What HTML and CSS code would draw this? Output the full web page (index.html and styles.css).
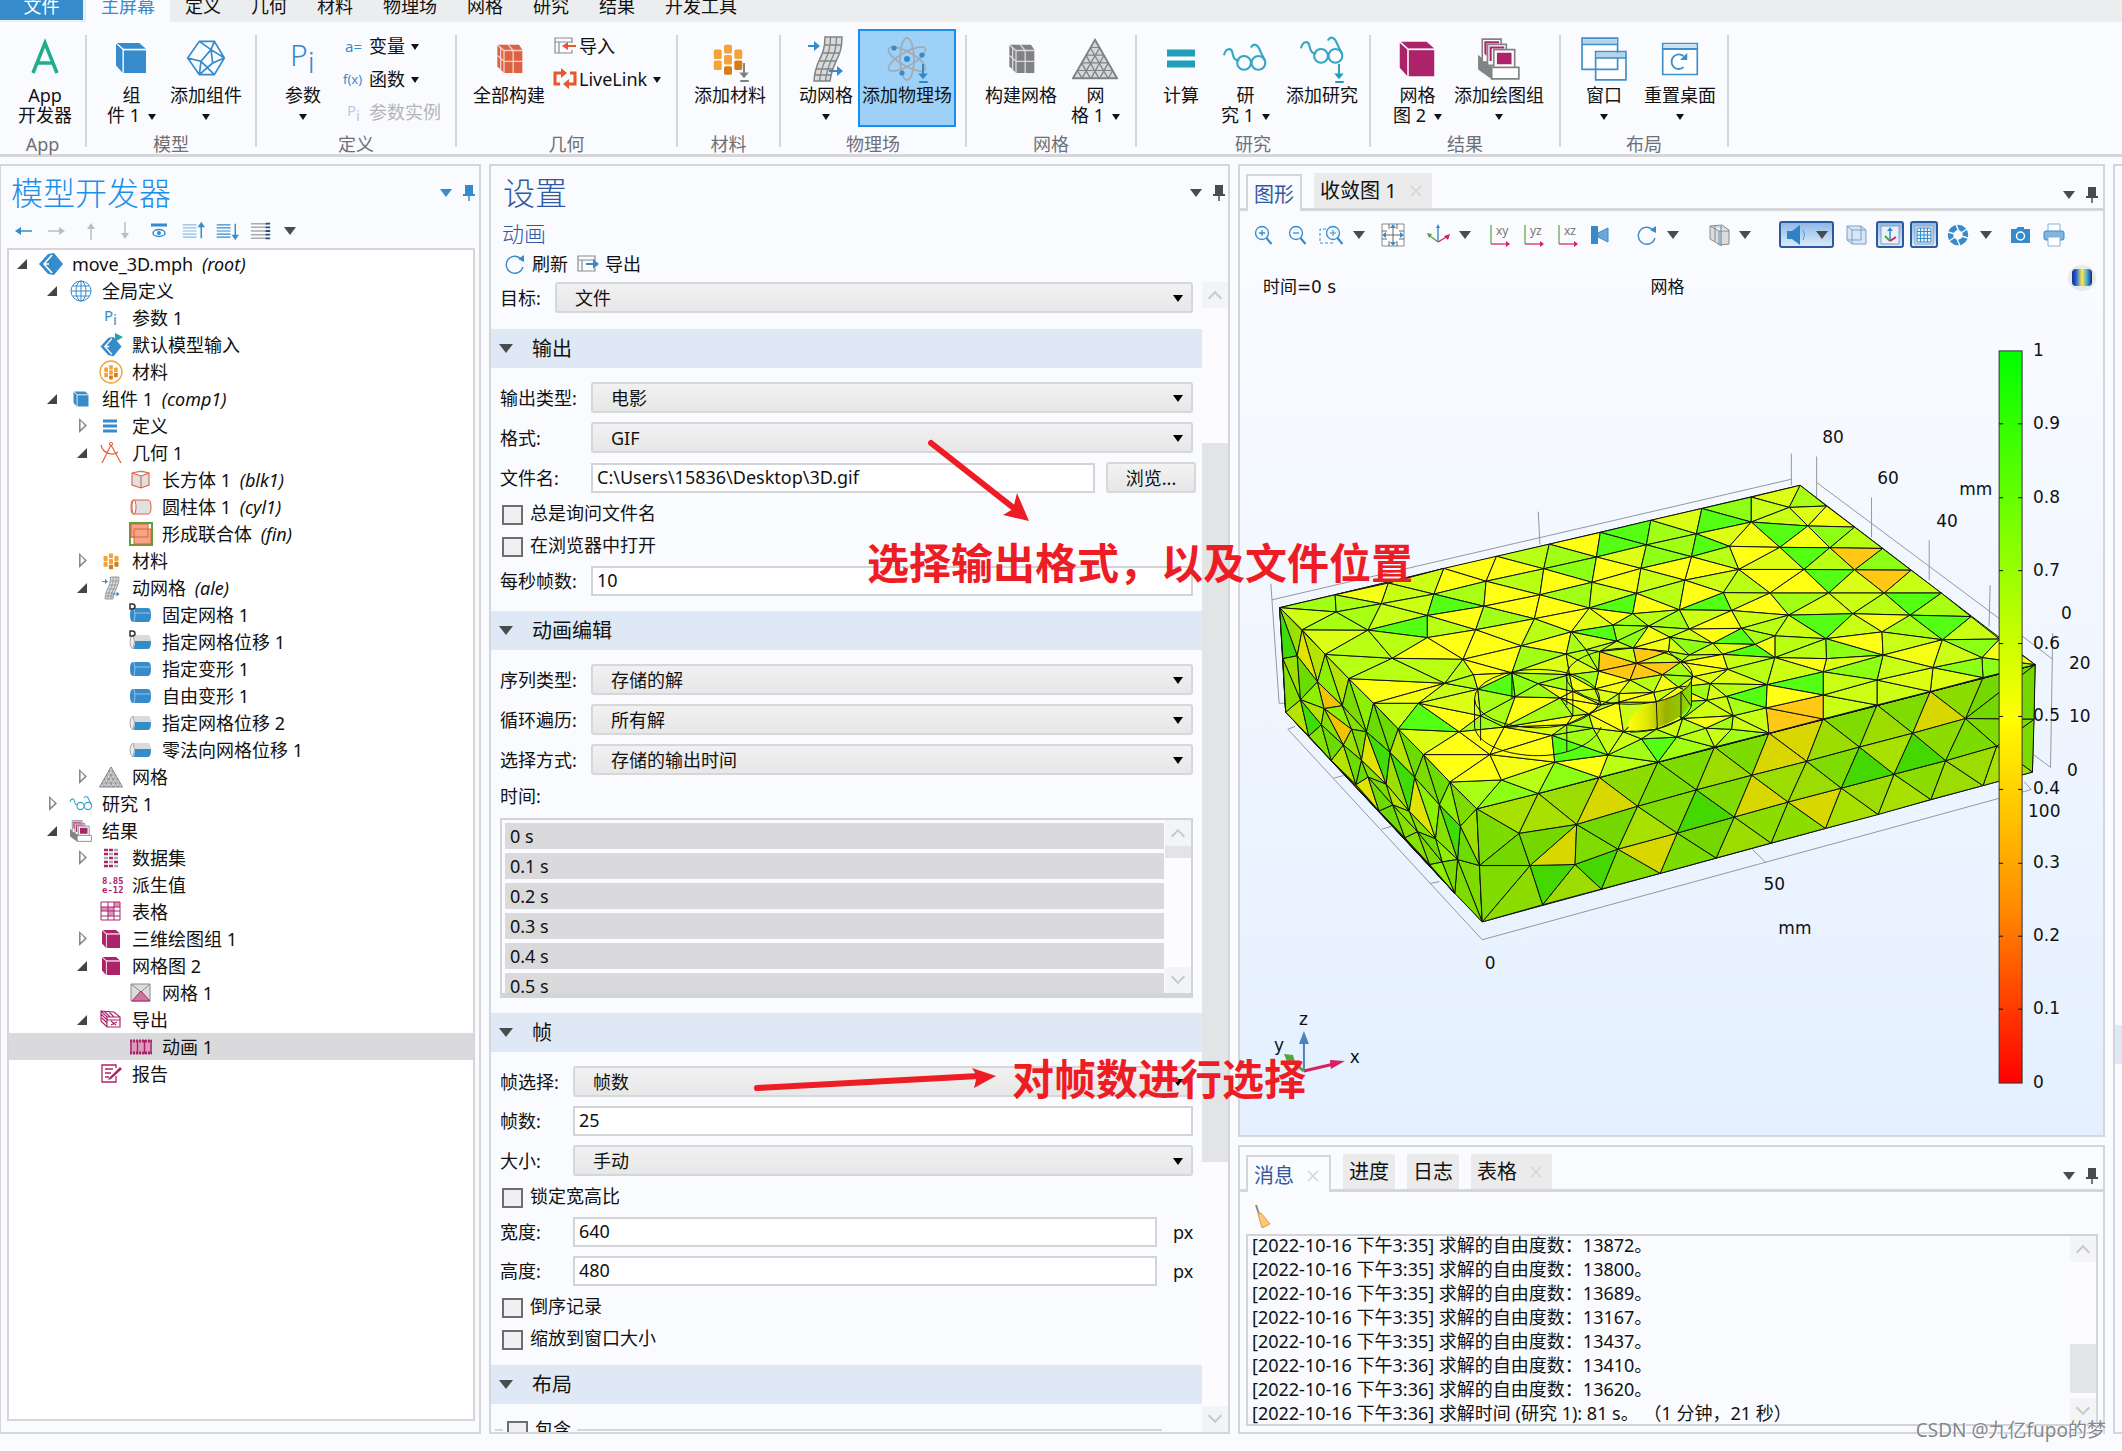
FILE: index.html
```html
<!DOCTYPE html>
<html lang="zh-CN">
<head>
<meta charset="utf-8">
<title>move_3D.mph</title>
<link rel="stylesheet" href="styles.css">
</head>
<body>
<svg class="defs" width="0" height="0" aria-hidden="true">
  <defs>
    <symbol id="cube" viewBox="0 0 24 24"><path d="M3 3.500 7 7v14L3 16.500zM3.500 3H17l4 3.500H7.500z" fill="currentColor"/><path d="M7.600 7.400H21V21H7.600z" fill="currentColor"/><path d="m3 3 4.300 4V21M7.300 7H21" fill="none" stroke="#fff" stroke-width=".6" opacity=".8"/></symbol>
    <symbol id="gridcube" viewBox="0 0 24 24"><path d="M5 4h13l2 3v14H9l-4-4z" fill="currentColor"/><path d="m5 4 4 3.500h11M9 7.500V21M14.500 7.500V21M9 14h11M5 10.500 9 14M11.500 4l3 3.500M7 5.500V19" fill="none" stroke="#fff" stroke-width=".8" opacity=".7"/></symbol>
    <symbol id="wirecube" viewBox="0 0 24 24"><path d="M1 12 8 2h9l6 10-6 10H8zM8 2l7 5-6 7-8-2M15 7l8 5M17 2l-2 5M9 14l8 8M8 22l1-8M15 7l1 8 7-3M16 15l-8 7" fill="none" stroke="#368ccb" stroke-width="1"/></symbol>
    <symbol id="mats" viewBox="0 0 24 24"><g fill="#f2a33c"><rect x="3" y="6" width="5" height="6" rx="1"/><rect x="3" y="13" width="5" height="6" rx="1"/><rect x="9.500" y="3" width="5" height="5.500" rx="1"/><rect x="9.500" y="9.500" width="5" height="6" rx="1"/><rect x="16" y="6" width="5" height="6" rx="1"/></g><g fill="#d67d1b"><rect x="9.500" y="16.500" width="5" height="5.500" rx="1"/><rect x="16" y="13" width="5" height="6" rx="1"/></g></symbol>
    <symbol id="matring" viewBox="0 0 24 24"><circle cx="12" cy="12" r="11" fill="none" stroke="#f2a33c" stroke-width="1.300"/><use href="#mats" x="3" y="3" width="18" height="18"/></symbol>
    <symbol id="down" viewBox="0 0 12 20"><path d="M6 0v14M2 19h9" stroke="currentColor" stroke-width="2" fill="none"/><path d="m1 10 5 6 5-6z" fill="currentColor"/></symbol>
    <symbol id="glasses" viewBox="0 0 24 24"><path d="M1 10c1-4 4-4 4.500-1S7 13 9 12.500M15 6c2-3 4-1 5 2l2.500 5" fill="none" stroke="#35a6c4" stroke-width="1.100"/><circle cx="11.500" cy="14" r="3.600" fill="none" stroke="#35a6c4" stroke-width="1.100"/><circle cx="19" cy="14" r="3.600" fill="none" stroke="#35a6c4" stroke-width="1.100"/></symbol>
    <symbol id="movemesh" viewBox="0 0 36 48"><path d="M17 2h17c0 22-9 22-12 44H6C7 24 17 24 17 2z" fill="#d9dadb" stroke="#828385" stroke-width="1.500"/><path d="M22.500 2c0 22-9 22-11 44M28.500 2c0 22-9 22-11 44M17 10h17M15 18h16M12 26h16M8 34h17M7 40h16" stroke="#828385" stroke-width="1.300" fill="none"/><path d="M0 11h8M21 36h8" stroke="#368ccb" stroke-width="2"/><path d="m6 6 6 5-6 5zM29 31l6 5-6 5z" fill="#368ccb"/></symbol>
    <symbol id="atom" viewBox="0 0 44 48"><g fill="none" stroke="#a3abb3" stroke-width="1.800"><ellipse cx="22" cy="24" rx="7" ry="21"/><ellipse cx="22" cy="24" rx="7" ry="21" transform="rotate(60 22 24)"/><ellipse cx="22" cy="24" rx="7" ry="21" transform="rotate(-60 22 24)"/></g><g fill="#368ccb"><circle cx="22" cy="24" r="3"/><circle cx="9" cy="13" r="2.600"/><circle cx="37" cy="20" r="2.600"/><circle cx="17" cy="38" r="2.600"/></g></symbol>
    <symbol id="trimesh" viewBox="0 0 48 44"><path d="M24 2 47 42H1z" fill="#d5d6d7" stroke="#808183" stroke-width="2"/><path d="M19 10h10M14.500 18h19M10 26h28M5.500 34h37M29 10 10.500 42M33.500 18 20 42M38 26l-9 16M42.500 34 38 42M19 10l18.500 32M14.500 18 28 42M10 26l9 16M5.500 34l5 8" stroke="#808183" stroke-width="1.300" fill="none"/></symbol>
    <symbol id="plots" viewBox="0 0 44 44"><path d="M2 18v14l14 10V30z" fill="#808482"/><g fill="#fff" stroke="#808482" stroke-width="1.600"><path d="M6 3h18v22H6z"/><path d="M11 8h18v20H11z"/><path d="M17 13h20v18H17z"/><path d="M15 30h26v11H15z"/></g><path d="M8 5h14v2H10v12l-2-2zM13 10h14v2H15v12h-2zM20 16h14v11H20z" fill="#ad236a"/></symbol>
    <symbol id="windows" viewBox="0 0 44 44"><path d="M1 2h34v30H1zM14 15h29v27H14z" fill="#fff" stroke="#3c90cd" stroke-width="1.600"/><path d="M2 3h32v4H2zM15 16h27v5H15z" fill="#b7d3ea"/><path d="M1 8h34M14 21h29" stroke="#3c90cd" stroke-width="1.500"/></symbol>
    <symbol id="reset" viewBox="0 0 44 44"><path d="M3 5h38v34H3z" fill="#fff" stroke="#3c90cd" stroke-width="1.800"/><path d="M4 6h36v4H4z" fill="#cfe1f1"/><path d="M3 11h38M26 19a8 8 0 1 0 0 12" fill="none" stroke="#3c90cd" stroke-width="2"/><path d="M30 15v8h-8z" fill="#3c90cd"/></symbol>
    <symbol id="pin" viewBox="0 0 12 18"><path d="M2 1h8v9h2v2H0v-2h2z" fill="currentColor"/><path d="M6 12v5" stroke="currentColor" stroke-width="1.500"/></symbol>
    <symbol id="arrow" viewBox="0 0 18 18"><path d="M4 9h14" stroke="currentColor" stroke-width="1.500"/><path d="m1 9 6-4v8z" fill="currentColor"/></symbol>
    <symbol id="logo" viewBox="0 0 24 24"><path d="m0 12 9-10 6-1 9 11-9 11-6-1z" fill="#368ccb"/><path d="M13 3 5 12l8 9M5 12h5" stroke="#fff" stroke-width="1.600" fill="none"/></symbol>
    <symbol id="logoin" viewBox="0 0 24 24"><use href="#logo" y="3" width="24" height="21"/><path d="m16 0 8 4-8 5z" fill="#28a0b4"/></symbol>
    <symbol id="globe" viewBox="0 0 24 24"><g fill="none" stroke="#368ccb"><circle cx="12" cy="12" r="10"/><ellipse cx="12" cy="12" rx="5" ry="10"/><path d="M12 2v20M2 12h20M4 7h16M4 17h16"/></g></symbol>
    <symbol id="bars" viewBox="0 0 24 24"><path d="M4 7h14M4 12h14M4 17h14" stroke="#368ccb" stroke-width="3"/></symbol>
    <symbol id="compass" viewBox="0 0 24 24"><path d="M3 22 12 4l10 18M2 4c2 9 12 11 17 7" fill="none" stroke="#e0603f" stroke-width="1.200"/><circle cx="12" cy="3" r="1.600" fill="none" stroke="#e0603f"/></symbol>
    <symbol id="block" viewBox="0 0 24 24"><path d="m3 5 9-2 8 2v12l-8 3-9-3zM3 5l9 3 8-3M12 8v12" fill="#dfe0e1" stroke="#e0603f" stroke-width="1.100"/></symbol>
    <symbol id="cyl" viewBox="0 0 24 24"><path d="M4 5h15q3 0 3 7t-3 7H4q-2 0-2-7t2-7z" fill="#dfe0e1" stroke="#e0603f"/><ellipse cx="5" cy="12" rx="2" ry="7" fill="#fff" stroke="#e0603f"/></symbol>
    <symbol id="union" viewBox="0 0 24 24"><path d="M1 1h22v22H1z" fill="#fff" stroke="#56a33f" stroke-width="2"/><path d="M2 2h17v5h3v15H5v-6H2z" fill="#f4a583"/><path d="M5 7h17v15H5zM2 2h17v13H2z" fill="none" stroke="#e0603f"/></symbol>
    <symbol id="cylb" viewBox="0 0 24 24"><path d="M4 5h15q3 0 3 7t-3 7H4q-3 0-3-7t3-7z" fill="#368ccb"/><path d="M5 5q2 7 0 14M6 10h15" stroke="#8fc4ea" fill="none"/></symbol>
    <symbol id="cylh" viewBox="0 0 24 24"><path d="M4 5h15q3 0 3 7t-3 7H4q-3 0-3-7t3-7z" fill="#d9dadc"/><path d="M6 11h16q0 8-3 8H5z" fill="#368ccb"/><path d="M4 5q3 7 0 14-3-2-3-7t3-7z" fill="#efeff0" stroke="#a6a8ab"/></symbol>
    <symbol id="dmark" viewBox="0 0 24 24"><path d="M1 1h2q3 0 3 2.500T3 6H1z" fill="#fff" stroke="#333" stroke-width="1.500"/></symbol>
    <symbol id="data" viewBox="0 0 24 24"><path d="M5 4h4M5 8h4M5 16h4M10 12h4M10 4h4M15 8h4M15 16h4M10 20h4M5 20h4" stroke="#ad236a" stroke-width="2.500"/><path d="M15 4h4M10 8h4M5 12h4M15 12h4M10 16h4M15 20h4" stroke="#aaa" stroke-width="2.500"/></symbol>
    <symbol id="table" viewBox="0 0 24 24"><path d="M2 7h7v4H2zM9 7h6v9H9zM15 2h6v5h-6z" fill="#d897b8"/><path d="M2 2h19v18H2zM9 2v18M15 2v18M2 7h19M2 11h19M2 16h19" stroke="#ad236a" fill="none"/></symbol>
    <symbol id="tri" viewBox="0 0 24 24"><path d="M2 3h19v17H2z" fill="#dcdcdd" stroke="#8a8a8c"/><path d="m2 3 10 8 9-8" stroke="#8a8a8c" fill="none"/><path d="m3 20 9-10 9 10z" fill="#c9779c" stroke="#ad236a"/></symbol>
    <symbol id="export" viewBox="0 0 24 24"><path d="m2 3 13 1 6 5v10H8l-6-6zM2 3l6 6h13M8 9v10M2 6l6 6h13M3 10l5 5M5 3l6 6M9 3l6 6M12 13l5 4M12 17l6-3" fill="none" stroke="#ad236a" stroke-width="1.200"/></symbol>
    <symbol id="film" viewBox="0 0 24 24"><path d="M1 5h22v14H1z" fill="#d99cba"/><path d="M1 6h22M1 18h22" stroke="#ad236a" stroke-width="3" stroke-dasharray="2 1"/><path d="M2 5v14M8.500 5v14M15.500 5v14M22 5v14" stroke="#ad236a" stroke-width="1.400"/></symbol>
    <symbol id="report" viewBox="0 0 24 24"><path d="M17 14v6H3V3h14v3M6 7h8M6 11h6M6 15h4" fill="none" stroke="#ad236a" stroke-width="1.300"/><path d="m10 16 11-11 2 2-11 10-3 1z" fill="#ad236a"/></symbol>
    <symbol id="mag" viewBox="0 0 24 24"><circle cx="11" cy="10" r="6.500" fill="#f3f9ff" stroke="#368ccb" stroke-width="1.300"/><path d="m15.500 15 5 6" stroke="#368ccb" stroke-width="2.200"/></symbol>
    <symbol id="cw" viewBox="0 0 24 24"><path d="M17 6a8.500 8.500 0 1 0 3 9" fill="none" stroke="#368ccb" stroke-width="1.400"/><path d="m15 7 6-4v7z" fill="#368ccb"/></symbol>
    <symbol id="port" viewBox="0 0 24 24"><path d="M19 9V4H2v15h17v-3M2 8h17M6 8v11" fill="none" stroke="#8a8c90" stroke-width="1.200"/></symbol>
    <symbol id="ax" viewBox="0 0 24 24"><path d="M4 2v19" stroke="#54a53f" stroke-width="1.200"/><path d="M4 21h17" stroke="#d8215f" stroke-width="1.200"/><path d="m19 18 4 3-4 3z" fill="#d8215f"/></symbol>
    <symbol id="lines" viewBox="0 0 24 24"><path d="M1 4h18M1 8h18M1 12h18M1 16h18M1 20h18" stroke="currentColor" stroke-width="1.600"/></symbol>
  </defs>
</svg>

<div class="app">
  <nav class="tabs">
    <a class="file" href="#file">文件</a><a class="on" href="#home">主屏幕</a><a href="#def">定义</a><a href="#geom">几何</a><a href="#mat">材料</a><a href="#phys">物理场</a><a href="#mesh">网格</a><a href="#study">研究</a><a href="#results">结果</a><a href="#dev">开发工具</a>
  </nav>

  <header class="ribbon">
    <section class="group g1"><div class="tools">
      <button class="tool"><svg class="big" viewBox="0 0 40 40"><path d="M8 35 20 5l12 30M12 25h16" fill="none" stroke="#20ae8c" stroke-width="3.500"/></svg>App<br>开发器</button></div><h2>App</h2></section>
    <section class="group g2"><div class="tools">
      <button class="tool"><svg class="big blue"><use href="#cube"/></svg>组<br>件 1<i class="caret"></i></button>
      <button class="tool"><svg class="big"><use href="#wirecube"/></svg>添加组件<br><i class="caret solo"></i></button></div><h2>模型</h2></section>
    <section class="group g3"><div class="tools">
      <button class="tool"><svg class="big" viewBox="0 0 40 40"><text class="pi" x="7" y="28">P<tspan dy="7">i</tspan></text></svg>参数<br><i class="caret solo"></i></button>
      <div class="list">
        <button class="mini"><svg viewBox="0 0 24 24"><text class="glyph" x="2" y="18">a=</text></svg>变量<i class="caret"></i></button>
        <button class="mini"><svg viewBox="0 0 24 24"><text class="glyph sm" x="0" y="17">f(x)</text></svg>函数<i class="caret"></i></button>
        <button class="mini" disabled><svg viewBox="0 0 24 24"><text class="glyph" x="4" y="16">P<tspan dy="5">i</tspan></text></svg>参数实例</button>
      </div></div><h2>定义</h2></section>
    <section class="group g4"><div class="tools">
      <button class="tool"><svg class="big red"><use href="#gridcube"/></svg>全部构建</button>
      <div class="list">
        <button class="mini"><svg viewBox="0 0 24 24"><use href="#port"/><path d="M11 12h12" stroke="#e6572b" stroke-width="2"/><path d="m9 12 6-4v8z" fill="#e6572b"/></svg>导入</button>
        <button class="mini"><svg viewBox="0 0 24 24"><path d="M9 6H2v11h5M15 17h7V6h-5" fill="none" stroke="#e6572b" stroke-width="3"/><path d="m8 1 6 5-6 5zM16 12l-6 5 6 5z" fill="#e6572b"/></svg>LiveLink<i class="caret"></i></button>
      </div></div><h2>几何</h2></section>
    <section class="group g5"><div class="tools">
      <button class="tool"><svg class="big wide" viewBox="0 0 44 48"><use href="#mats" x="1" y="5" width="38" height="38"/><use href="#down" x="30" y="28" width="12" height="19" color="#808184"/></svg>添加材料</button></div><h2>材料</h2></section>
    <section class="group g6"><div class="tools">
      <button class="tool"><svg class="big wide"><use href="#movemesh"/></svg>动网格<br><i class="caret solo"></i></button>
      <button class="tool on"><svg class="big wide" viewBox="0 0 44 48"><use href="#atom"/><use href="#down" x="31" y="29" width="14" height="19" color="#2f86c8"/></svg>添加物理场</button></div><h2>物理场</h2></section>
    <section class="group g7"><div class="tools">
      <button class="tool"><svg class="big gray"><use href="#gridcube"/></svg>构建网格</button>
      <button class="tool"><svg class="big wide"><use href="#trimesh"/></svg>网<br>格 1<i class="caret"></i></button></div><h2>网格</h2></section>
    <section class="group g8"><div class="tools">
      <button class="tool"><svg class="big" viewBox="0 0 40 40"><path d="M6 15h28M6 26h28" stroke="#229fb8" stroke-width="7"/></svg>计算</button>
      <button class="tool"><svg class="big wide"><use href="#glasses"/></svg>研<br>究 1<i class="caret"></i></button>
      <button class="tool"><svg class="big wide" viewBox="0 0 46 48"><use href="#glasses" x="0" y="-6" width="46" height="46"/><use href="#down" x="33" y="29" width="14" height="19" color="#229fb8"/></svg>添加研究</button></div><h2>研究</h2></section>
    <section class="group g9"><div class="tools">
      <button class="tool"><svg class="big wide plum"><use href="#cube"/></svg>网格<br>图 2<i class="caret"></i></button>
      <button class="tool"><svg class="big wide"><use href="#plots"/></svg>添加绘图组<br><i class="caret solo"></i></button></div><h2>结果</h2></section>
    <section class="group g10"><div class="tools">
      <button class="tool"><svg class="big wide"><use href="#windows"/></svg>窗口<br><i class="caret solo"></i></button>
      <button class="tool"><svg class="big wide pad4"><use href="#reset"/></svg>重置桌面<br><i class="caret solo"></i></button></div><h2>布局</h2></section>
  </header>

  <main class="work">
    <section class="panel builder">
      <div class="head"><h1>模型开发器</h1><span class="winctl blue"><i class="caret lg"></i><svg class="pin"><use href="#pin"/></svg></span></div>
      <div class="treebar">
        <button aria-label="后退"><svg class="s18 blue"><use href="#arrow"/></svg></button>
        <button aria-label="前进"><svg class="s18 dim r180"><use href="#arrow"/></svg></button>
        <button aria-label="上移"><svg class="s18 dim r90"><use href="#arrow"/></svg></button>
        <button aria-label="下移"><svg class="s18 dim r270"><use href="#arrow"/></svg></button>
        <button aria-label="显示"><svg class="s18" viewBox="0 0 18 18"><path d="M1 3h16" stroke="#368ccb" stroke-width="3"/><ellipse cx="9" cy="11" rx="6" ry="3.500" fill="none" stroke="#368ccb" stroke-width="1.500"/><circle cx="9" cy="11" r="2" fill="#368ccb"/></svg></button>
        <button aria-label="折叠"><svg class="s24" viewBox="0 0 24 24"><use href="#lines" width="20" height="24" color="#8abbe2"/><path d="M21 20V5" stroke="#368ccb" stroke-width="1.600"/><path d="m17 8 4-6 4 6z" fill="#368ccb"/></svg></button>
        <button aria-label="展开"><svg class="s24" viewBox="0 0 24 24"><use href="#lines" width="20" height="24" color="#368ccb"/><path d="M21 4v15" stroke="#368ccb" stroke-width="1.600"/><path d="m17 16 4 6 4-6z" fill="#368ccb"/></svg></button>
        <button aria-label="列"><svg class="s24" viewBox="0 0 24 24"><use href="#lines" width="24" height="24" color="#aaabad"/><path d="M17 4h5M17 8h5M17 12h5M17 16h5M17 20h5" stroke="#2d4f80" stroke-width="2"/></svg></button>
        <i class="caret lg dark"></i>
      </div>
      <ul class="tree">
        <li class="l0"><i class="open"></i><svg><use href="#logo"/></svg>move_3D.mph <em>(root)</em></li>
        <li class="l1"><i class="open"></i><svg><use href="#globe"/></svg>全局定义</li>
        <li class="l2"><i></i><svg viewBox="0 0 24 24"><text class="glyph" x="5" y="15">P<tspan dy="4">i</tspan></text></svg>参数 1</li>
        <li class="l2"><i></i><svg><use href="#logoin"/></svg>默认模型输入</li>
        <li class="l2"><i></i><svg><use href="#matring"/></svg>材料</li>
        <li class="l1"><i class="open"></i><svg class="blue pad"><use href="#cube"/></svg>组件 1 <em>(comp1)</em></li>
        <li class="l2"><i class="shut"></i><svg><use href="#bars"/></svg>定义</li>
        <li class="l2"><i class="open"></i><svg><use href="#compass"/></svg>几何 1</li>
        <li class="l3"><i></i><svg><use href="#block"/></svg>长方体 1 <em>(blk1)</em></li>
        <li class="l3"><i></i><svg><use href="#cyl"/></svg>圆柱体 1 <em>(cyl1)</em></li>
        <li class="l3"><i></i><svg><use href="#union"/></svg>形成联合体 <em>(fin)</em></li>
        <li class="l2"><i class="shut"></i><svg class="pad"><use href="#mats"/></svg>材料</li>
        <li class="l2"><i class="open"></i><svg><use href="#movemesh"/></svg>动网格 <em>(ale)</em></li>
        <li class="l3"><i></i><svg><use href="#cylb"/><use href="#dmark"/></svg>固定网格 1</li>
        <li class="l3"><i></i><svg><use href="#cylh"/><use href="#dmark"/></svg>指定网格位移 1</li>
        <li class="l3"><i></i><svg><use href="#cylb"/></svg>指定变形 1</li>
        <li class="l3"><i></i><svg><use href="#cylb"/></svg>自由变形 1</li>
        <li class="l3"><i></i><svg><use href="#cylh"/></svg>指定网格位移 2</li>
        <li class="l3"><i></i><svg><use href="#cylh"/></svg>零法向网格位移 1</li>
        <li class="l2"><i class="shut"></i><svg><use href="#trimesh"/></svg>网格</li>
        <li class="l1"><i class="shut"></i><svg><use href="#glasses"/></svg>研究 1</li>
        <li class="l1"><i class="open"></i><svg><use href="#plots"/></svg>结果</li>
        <li class="l2"><i class="shut"></i><svg><use href="#data"/></svg>数据集</li>
        <li class="l2"><i></i><svg viewBox="0 0 24 24"><text class="num" x="3" y="11">8.85</text><text class="num" x="3" y="20">e-12</text></svg>派生值</li>
        <li class="l2"><i></i><svg><use href="#table"/></svg>表格</li>
        <li class="l2"><i class="shut"></i><svg class="plum"><use href="#cube"/></svg>三维绘图组 1</li>
        <li class="l2"><i class="open"></i><svg class="plum"><use href="#cube"/></svg>网格图 2</li>
        <li class="l3"><i></i><svg><use href="#tri"/></svg>网格 1</li>
        <li class="l2"><i class="open"></i><svg><use href="#export"/></svg>导出</li>
        <li class="l3 sel"><i></i><svg><use href="#film"/></svg>动画 1</li>
        <li class="l2"><i></i><svg><use href="#report"/></svg>报告</li>
      </ul>
    </section>

    <section class="panel settings">
      <div class="head"><h1>设置</h1><span class="winctl dark"><i class="caret lg"></i><svg class="pin"><use href="#pin"/></svg></span></div>
      <h2 class="sub">动画</h2>
      <div class="actions">
        <button><svg><use href="#cw"/></svg>刷新</button>
        <button><svg viewBox="0 0 24 24"><use href="#port"/><path d="M10 12h9" stroke="#368ccb" stroke-width="2"/><path d="m17 7 6 5-6 5z" fill="#368ccb"/></svg>导出</button>
      </div>
      <div class="scroller">
        <form class="form">
          <div class="row target"><label for="target">目标:</label><span class="pick"><select id="target"><option>文件</option></select></span></div>
          <h3><i class="caret lg dark"></i>输出</h3>
          <div class="body wide">
            <div class="row"><label for="otype">输出类型:</label><span class="pick"><select id="otype"><option>电影</option></select></span></div>
            <div class="row"><label for="fmt">格式:</label><span class="pick"><select id="fmt"><option>GIF</option></select></span></div>
            <div class="row"><label for="fname">文件名:</label><input type="text" id="fname" value="C:\Users\15836\Desktop\3D.gif"><button type="button" class="browse">浏览...</button></div>
            <label class="check"><input type="checkbox">总是询问文件名</label>
            <label class="check"><input type="checkbox">在浏览器中打开</label>
            <div class="row"><label for="fps">每秒帧数:</label><input type="text" id="fps" value="10"></div>
          </div>
          <h3><i class="caret lg dark"></i>动画编辑</h3>
          <div class="body wide">
            <div class="row"><label for="seq">序列类型:</label><span class="pick"><select id="seq"><option>存储的解</option></select></span></div>
            <div class="row"><label for="loop">循环遍历:</label><span class="pick"><select id="loop"><option>所有解</option></select></span></div>
            <div class="row"><label for="sel">选择方式:</label><span class="pick"><select id="sel"><option>存储的输出时间</option></select></span></div>
            <div class="caption">时间:</div>
            <div class="times">
              <ul><li>0 s</li><li>0.1 s</li><li>0.2 s</li><li>0.3 s</li><li>0.4 s</li><li>0.5 s</li></ul>
              <div class="bar t1"><i class="up"></i><b></b><i class="dn"></i></div>
            </div>
          </div>
          <h3><i class="caret lg dark"></i>帧</h3>
          <div class="body narrow">
            <div class="row"><label for="fsel">帧选择:</label><span class="pick"><select id="fsel"><option>帧数</option></select></span></div>
            <div class="row"><label for="fnum">帧数:</label><input type="text" id="fnum" value="25"></div>
            <div class="row"><label for="size">大小:</label><span class="pick"><select id="size"><option>手动</option></select></span></div>
            <label class="check"><input type="checkbox">锁定宽高比</label>
            <div class="row"><label for="w">宽度:</label><input type="text" id="w" value="640"><span class="unit">px</span></div>
            <div class="row"><label for="h">高度:</label><input type="text" id="h" value="480"><span class="unit">px</span></div>
            <label class="check"><input type="checkbox">倒序记录</label>
            <label class="check"><input type="checkbox">缩放到窗口大小</label>
          </div>
          <h3><i class="caret lg dark"></i>布局</h3>
          <fieldset class="include"><legend><label class="check"><input type="checkbox">包含</label></legend></fieldset>
        </form>
        <div class="bar t2"><i class="up"></i><b></b><i class="dn"></i></div>
      </div>
    </section>

    <div class="right">
      <section class="panel graphics">
        <div class="dock"><button class="dtab on">图形</button><button class="dtab">收敛图 1<svg class="x" viewBox="0 0 14 14"><path d="m2 2 10 10M12 2 2 12"/></svg></button><span class="winctl dark"><i class="caret lg"></i><svg class="pin"><use href="#pin"/></svg></span></div>
        <div class="gbar">
          <button aria-label="放大"><svg viewBox="0 0 24 24"><use href="#mag"/><path d="M8 10h6M11 7v6" stroke="#368ccb" stroke-width="1.300"/></svg></button>
          <button aria-label="缩小"><svg viewBox="0 0 24 24"><use href="#mag"/><path d="M8 10h6" stroke="#368ccb" stroke-width="1.300"/></svg></button>
          <button aria-label="框选缩放"><svg viewBox="0 0 24 24"><path d="M12 6H1v14h14" fill="none" stroke="#368ccb" stroke-dasharray="3 2"/><use href="#mag" x="3"/><path d="M11 10h6M14 7v6" stroke="#368ccb"/></svg></button><i class="caret lg dark"></i>
          <button class="m1" aria-label="缩放到范围"><svg viewBox="0 0 24 24"><path d="M1 1h22v22H1z" fill="#fff" stroke="#8a8a8d"/><path d="M12 3v18M3 12h18M1 8h5M1 16h5M18 8h5M18 16h5M8 1v5M16 1v5M8 18v5M16 18v5" stroke="#666" fill="none"/><path d="m12 1 3 4H9zM12 23l3-4H9zM1 12l4-3v6zM23 12l-4-3v6z" fill="#368ccb"/></svg></button>
          <button class="m4" aria-label="默认视图"><svg viewBox="0 0 24 24"><path d="M11 19V3" stroke="#368ccb" stroke-width="1.400"/><path d="m11 19-9-7" stroke="#54a53f" stroke-width="1.400"/><path d="m11 19 10-6" stroke="#d8215f" stroke-width="1.400"/><path d="m23 11-2 6-4-4z" fill="#d8215f"/><path d="m0 10 5 1-3 4z" fill="#54a53f"/><path d="m11 1 2 4H9z" fill="#368ccb"/></svg></button><i class="caret lg dark"></i>
          <button class="m1" aria-label="xy"><svg viewBox="0 0 24 24"><use href="#ax"/><text class="axl" x="9" y="12">xy</text></svg></button>
          <button aria-label="yz"><svg viewBox="0 0 24 24"><use href="#ax"/><text class="axl" x="9" y="12">yz</text></svg></button>
          <button aria-label="xz"><svg viewBox="0 0 24 24"><use href="#ax"/><text class="axl" x="9" y="12">xz</text></svg></button>
          <button aria-label="相机"><svg viewBox="0 0 24 24"><path d="M2 3h7v18H2z" fill="#368ccb"/><path d="m9 10 10-5v14L9 14z" fill="#6ea6d8" stroke="#368ccb"/></svg></button>
          <button class="m4" aria-label="旋转"><svg><use href="#cw"/></svg></button><i class="caret lg dark"></i>
          <button class="m3" aria-label="透明"><svg viewBox="0 0 24 24"><path d="m3 3 12-1 7 5v14l-9 1-10-6zM3 3l9 5h10M12 8v14M8 2v16" fill="#dcdcdc" stroke="#8a8a8a"/><path d="M14 3v20" stroke="#368ccb"/></svg></button><i class="caret lg dark"></i>
          <button class="tog wide2" aria-label="光源"><svg viewBox="0 0 24 24"><path d="M1 8h5l8-6v20l-8-6H1z" fill="#2f83c5"/><path d="M17 7q3 5 0 10" fill="none" stroke="#5b9bd1"/></svg><i class="caret lg dark"></i></button>
          <button aria-label="线框"><svg viewBox="0 0 24 24"><path d="M3 3h14l5 4v14H8l-5-4z" fill="#d8e6f5" stroke="#7f9fc4"/><path d="m3 3 5 4h14M8 7v14M3 17h14V3" fill="none" stroke="#7f9fc4"/></svg></button>
          <button class="tog" aria-label="坐标轴"><svg viewBox="0 0 24 24"><path d="M3 3h18v18H3z" fill="#e8f2fb" stroke="#8a9db5"/><path d="M12 18V6" stroke="#368ccb" stroke-width="1.500"/><path d="m12 4 3 4H9z" fill="#368ccb"/><path d="m12 18-5-5" stroke="#54a53f" stroke-width="2"/><path d="m12 18 6-4" stroke="#d8215f" stroke-width="2"/></svg></button>
          <button class="tog" aria-label="网格线"><svg viewBox="0 0 24 24"><path d="M3 3h18v18H3z" fill="#e8f2fb" stroke="#8a9db5"/><path d="M5 5h14v14H5zM8.500 5v14M12 5v14M15.500 5v14M5 8.500h14M5 12h14M5 15.500h14" fill="none" stroke="#368ccb"/></svg></button>
          <button aria-label="快门"><svg viewBox="0 0 24 24"><circle cx="12" cy="12" r="7.500" fill="none" stroke="#368ccb" stroke-width="5.500"/><path d="m10 1 3 8M21 6l-6 4M22 15l-7-2M14 23l-3-7M3 18l6-4M2 9l7 2" stroke="#fafbff" stroke-width="1.500"/></svg></button><i class="caret lg dark"></i>
          <button class="m1" aria-label="快照"><svg viewBox="0 0 24 24"><path d="M3 6h5l2-2h6v2h6v14H3z" fill="#368ccb"/><circle cx="12.500" cy="13" r="4" fill="#368ccb" stroke="#fff" stroke-width="1.500"/></svg></button>
          <button aria-label="打印"><svg viewBox="0 0 24 24"><path d="M6 1h12v8H6z" fill="#fff" stroke="#7fb3dc"/><rect x="2" y="8" width="20" height="9" rx="2" fill="#82b4de" stroke="#368ccb"/><path d="M6 14h12v9H6z" fill="#fff" stroke="#7fb3dc"/></svg></button>
        </div>
        <svg class="plot" viewBox="1239 256 864 878" role="img" aria-label="网格">
          <defs><linearGradient id="scale" x1="0" y1="0" x2="0" y2="1"><stop offset="0" stop-color="#00ff00"/><stop offset=".5" stop-color="#ffff00"/><stop offset=".75" stop-color="#ff9000"/><stop offset="1" stop-color="#ff0000"/></linearGradient>
          <linearGradient id="orb"><stop offset="0" stop-color="#0a2a90"/><stop offset=".2" stop-color="#1e62d8"/><stop offset=".5" stop-color="#ffe94a"/><stop offset=".75" stop-color="#4aa8d8"/><stop offset="1" stop-color="#0a2a80"/></linearGradient>
          <linearGradient id="wall"><stop offset="0" stop-color="#ffff10"/><stop offset=".3" stop-color="#e0e800"/><stop offset=".6" stop-color="#9ab000"/><stop offset="1" stop-color="#8bdc00"/></linearGradient></defs>
          <g class="mesh" transform="translate(1260 400) scale(.5497 .3571)">
            <path class="axis" d="M20 555 966 217M966 145v89M505 308l3 92M1012 153v114M1012 226l333 382 97 114M1112 268v112M1217 388v112M1328 514l-2 116M18 510l15 335h12M1442 648l-4 377-30-35M1390 1065l13 22L403 1508 49 918l13-8M895 1255l25 37M132 1055l18-7M220 1198l18-8M308 1350l17-5"/>
            <g id="mesh"></g>
            <path d="M720 842c30-12 55-35 64-65v65c-10 40-50 75-100 80-30 0-15-60 36-80z" fill="url(#wall)"/>
            <path class="rim" d="M784 772v80M720 842l2 75M765 812v76M765 812l18 40M557 770v80M568 812v70M557 905v75M457 760v70M400 880v70"/>
            <ellipse class="rim" cx="503" cy="832" rx="114" ry="82"/>
            <ellipse class="rim" cx="671" cy="769" rx="115" ry="79"/>
            <path class="rim" d="M389 832v80c6 50 60 80 116 80s104-36 114-80M784 852c-8 40-54 74-112 74"/>
          </g>
          <rect x="1999" y="349" width="23" height="733" fill="url(#scale)" stroke="#333"/>
          <path d="M1999 422h4m15 0h4M1999 496h4m15 0h4M1999 569h4m15 0h4M1999 642h4m15 0h4M1999 715h4m15 0h4M1999 788h4m15 0h4M1999 862h4m15 0h4M1999 935h4m15 0h4M1999 1008h4m15 0h4" stroke="#111"/>
          <g class="lbl">
            <text x="2033" y="354">1</text><text x="2033" y="427">0.9</text><text x="2033" y="501">0.8</text><text x="2033" y="574">0.7</text><text x="2033" y="647">0.6</text><text x="2033" y="720">0.5</text><text x="2033" y="793">0.4</text><text x="2033" y="867">0.3</text><text x="2033" y="940">0.2</text><text x="2033" y="1013">0.1</text><text x="2033" y="1087">0</text>
            <text x="1822" y="441">80</text><text x="1877" y="482">60</text><text x="1959" y="493">mm</text><text x="1936" y="525">40</text><text x="2061" y="617">0</text><text x="2069" y="667">20</text><text x="2069" y="721">10</text><text x="2067" y="775">0</text><text x="2028" y="816">100</text><text x="1763" y="889">50</text><text x="1778" y="933">mm</text><text x="1484" y="968">0</text>
            <text x="1262" y="291">时间=0 s</text><text x="1650" y="291">网格</text>
            <text x="1298" y="1024">z</text><text x="1273" y="1050">y</text><text x="1349" y="1062">x</text>
          </g>
          <path d="M1303 1070v-30" stroke="#4a84bd" stroke-width="2"/><path d="m1303 1030 5 13h-10z" fill="#4a84bd"/>
          <path d="m1303 1070 30-7" stroke="#d8215f" stroke-width="3"/><path d="m1344 1060-14 8-1-9z" fill="#d8215f"/>
          <path d="m1303 1070-10-8" stroke="#54a53f" stroke-width="3"/><path d="m1283 1053 9 1 3 10-8-1z" fill="#54a53f"/>
          <ellipse cx="2082" cy="276" rx="14" ry="13" fill="#e9e9e6"/><rect x="2072" y="267" width="20" height="17" rx="4" fill="url(#orb)"/>
        </svg>
      </section>
      <section class="panel messages">
        <div class="dock"><button class="dtab on">消息<svg class="x" viewBox="0 0 14 14"><path d="m2 2 10 10M12 2 2 12"/></svg></button><button class="dtab">进度</button><button class="dtab">日志</button><button class="dtab">表格<svg class="x" viewBox="0 0 14 14"><path d="m2 2 10 10M12 2 2 12"/></svg></button><span class="winctl dark"><i class="caret lg"></i><svg class="pin"><use href="#pin"/></svg></span></div>
        <div class="mbar"><button aria-label="清除"><svg viewBox="0 0 24 24"><path d="m6 1 3 9" stroke="#8a8a8a" stroke-width="2"/><path d="m8 10 3-1 9 11-8 4z" fill="#fbc878" stroke="#e39a3c"/></svg></button></div>
        <div class="log">
          <div class="lines"><p>[2022-10-16 下午3:35] 求解的自由度数：13872。</p><p>[2022-10-16 下午3:35] 求解的自由度数：13800。</p><p>[2022-10-16 下午3:35] 求解的自由度数：13689。</p><p>[2022-10-16 下午3:35] 求解的自由度数：13167。</p><p>[2022-10-16 下午3:35] 求解的自由度数：13437。</p><p>[2022-10-16 下午3:36] 求解的自由度数：13410。</p><p>[2022-10-16 下午3:36] 求解的自由度数：13620。</p><p>[2022-10-16 下午3:36] 求解时间 (研究 1): 81 s。 （1 分钟，21 秒）</p></div>
          <div class="bar t3"><i class="up"></i><b></b><i class="dn"></i></div>
        </div>
      </section>
    </div>
    <aside class="edge"><i></i></aside>
  </main>

  <svg class="note arrow1" viewBox="0 0 104 84"><path d="m4 4 84 66" stroke="#ee1c24" stroke-width="6" stroke-linecap="round"/><path d="M102 82 76 76l10-6 4-16z" fill="#ee1c24"/></svg>
  <p class="note n1">选择输出格式，以及文件位置</p>
  <svg class="note arrow2" viewBox="0 0 244 28"><path d="m4 21 222-12" stroke="#ee1c24" stroke-width="6" stroke-linecap="round"/><path d="m243 9-22 12 3-12-5-8z" fill="#ee1c24"/></svg>
  <p class="note n2">对帧数进行选择</p>
  <p class="note mark">CSDN @九亿fupo的梦</p>
</div>
<script src="mesh.js"></script>
</body>
</html>
```
FILE: styles.css
```css
* { box-sizing: border-box; }
body { margin: 0; background: #fafbff; color: #111; font: 400 18px/24px "Noto Sans", "Noto Sans CJK SC", sans-serif; }
h1, h2, h3, p, ul, fieldset { margin: 0; padding: 0; font-weight: 400; list-style: none; border: 0; }
button { margin: 0; padding: 0; border: 0; background: none; font: inherit; color: inherit; }
.defs { position: absolute; }
.app { position: relative; display: flex; flex-direction: column; height: 100vh; overflow: hidden; }
.blue { color: #368ccb; }
.red { color: #dc6242; }
.gray { color: #808184; }
.plum { color: #ad236a; }
.dark { color: #4a4b4d; }
.dim { color: #bdbec1; }
.caret { display: inline-block; border: 4px solid transparent; border-top: 6px solid #111; border-bottom: 0; margin: 0 0 2px 8px; }
.caret.lg { border-width: 8px 6px 0; margin: 0; border-top-color: currentColor; }
.caret.solo { margin-left: 0; }

.tabs { display: flex; flex: none; height: 22px; background: #ecedee; overflow: hidden; }
.tabs a { padding: 0 15px; height: 22px; line-height: 12px; color: #111; text-decoration: none; }
.tabs .file { width: 83px; height: 20px; padding: 0; text-align: center; background: #368ccb; color: #fff; margin-right: 3px; }
.tabs .on { background: #fafbff; color: #368ccb; }

.ribbon { display: flex; flex: none; height: 135px; padding-top: 7px; border-bottom: 3px solid #d5d6da; }
.group { display: flex; flex: none; flex-direction: column; border-right: 2px solid #d5d6da; height: 112px; margin-top: 6px; }
.group h2 { font-size: 18px; line-height: 20px; color: #6f7073; text-align: center; }
.tools { display: flex; flex: none; align-items: flex-start; gap: 6px; height: 98px; margin-top: -6px; margin-bottom: 7px; }
.tool { min-width: 56px; padding: 6px 4px 0; line-height: 20px; text-align: center; white-space: nowrap; }
.tool.on { background: #9ed1f8; border: 2px solid #1590ee; padding: 4px 2px 20px; }
.big { display: block; width: 40px; height: 40px; margin: 3px auto 7px; }
.big.wide { width: 46px; height: 48px; margin: 0 auto 2px; }
.big.pad4 { padding: 3px; }
.g1 { width: 87px; }
.g1 .tools { padding-left: 14px; }
.g2 { width: 170px; }
.g2 .tools { padding-left: 16px; }
.g3 { width: 200px; }
.g3 .tools { gap: 12px; padding-left: 18px; }
.g4 { width: 221px; }
.g4 .tools { gap: 4px; padding-left: 12px; }
.g5 { width: 103px; }
.g5 .tools { padding-left: 12px; }
.g6 { width: 186px; }
.g6 .tools { gap: 1px; padding-left: 14px; }
.g7 { width: 170px; }
.g7 .tools { padding-left: 14px; }
.g8 { width: 234px; }
.g8 .tools { gap: 8px; padding-left: 16px; }
.g9 { width: 190px; }
.g9 .tools { gap: 4px; padding-left: 18px; }
.g10 { width: 168px; }
.g10 .tools { gap: 8px; padding-left: 15px; }
.list { display: flex; flex-direction: column; gap: 9px; padding-top: 5px; }
.mini { display: flex; align-items: center; gap: 2px; line-height: 24px; white-space: nowrap; }
.mini svg { width: 24px; height: 24px; }
.mini .caret { margin: 2px 0 0 4px; }
.mini:disabled { color: #b4b5b8; }
.mini:disabled .glyph { fill: #b7cbe2; }
.pi { font-size: 30px; font-weight: 300; fill: #368ccb; }
.glyph { font-size: 15px; fill: #368ccb; }
.glyph.sm { font-size: 13px; }
.num { font: 700 9px "DejaVu Sans Mono", monospace; fill: #ad236a; }
.axl { font-size: 12px; fill: #777; }

.work { flex: 1; min-height: 0; display: grid; grid-template-columns: 481fr 741fr 867fr 9px; gap: 8px; padding: 7px 0 17px; }
.panel { border: 2px solid #d5d6da; display: flex; flex-direction: column; min-width: 0; min-height: 0; }
.head { display: flex; justify-content: space-between; align-items: center; height: 54px; flex: none; }
.head h1 { font-size: 32px; line-height: 48px; font-weight: 300; }
.winctl { display: flex; align-items: center; gap: 11px; padding-right: 3px; margin-left: auto; }
.pin { width: 12px; height: 18px; }
.builder { border-left-width: 1px; padding: 0 4px 11px 6px; }
.builder h1 { color: #1e8fe6; margin-left: 4px; }
.builder .winctl { padding-right: 0; }
.treebar { display: flex; align-items: center; gap: 12px; height: 28px; flex: none; padding: 0 0 6px 5px; }
.treebar button { display: flex; width: 22px; justify-content: center; }
.s18 { width: 18px; height: 18px; overflow: visible; }
.s24 { width: 24px; height: 22px; flex: none; overflow: visible; }
.r180 { transform: rotate(180deg); }
.r90 { transform: rotate(90deg); }
.r270 { transform: rotate(270deg); }
.tree { flex: 1; min-height: 0; overflow: hidden; background: #fff; border: 2px solid #d5d6da; }
.tree li { display: flex; align-items: center; height: 27px; white-space: pre; }
.tree li svg { width: 24px; height: 24px; margin: 0 9px 0 10px; flex: none; }
.tree li svg.pad { padding: 2px; }
.tree li > i { width: 14px; flex: none; }
.tree em { margin-left: 4px; }
.tree .l0 { padding-left: 6px; }
.tree .l1 { padding-left: 36px; }
.tree .l2 { padding-left: 66px; }
.tree .l3 { padding-left: 96px; }
.sel { background: #dadadc; }
.open::before { content: ""; display: block; margin-left: 2px; border-left: 10px solid transparent; border-bottom: 10px solid #444; width: 0; }
.shut::before { content: ""; display: block; width: 8px; height: 15px; margin-left: 4px; background: #888; clip-path: polygon(0 0, 100% 50%, 0 100%, 0 85%, 72% 50%, 20% 18%, 20% 84%, 0 100%); }

.settings h1 { color: #31599f; margin-left: 12px; }
.sub { color: #31599f; font-size: 22px; line-height: 26px; font-weight: 300; margin: 0 0 3px 11px; }
.actions { display: flex; align-items: flex-start; gap: 8px; height: 33px; flex: none; padding: 3px 0 0 12px; }
.actions button { display: flex; align-items: center; gap: 5px; }
.actions svg { width: 24px; height: 24px; }
.scroller { flex: 1; min-height: 0; display: flex; overflow: hidden; }
.form { flex: 1; min-width: 0; overflow: hidden; }
.row { display: flex; align-items: center; }
.row label { flex: none; line-height: 30px; }
.target { padding: 0 9px 16px 9px; }
.target label { width: 55px; }
.wide .row label { width: 91px; }
.narrow .row label { width: 73px; }
.form h3 { display: flex; align-items: center; gap: 19px; height: 39px; padding-left: 8px; background: #dfe9f5; font-size: 20px; }
.form h3 .caret { border-width: 9px 7px 0; }
.body { display: flex; flex-direction: column; gap: 9px; padding: 14px 9px 15px 9px; }
.pick { position: relative; flex: 1; display: flex; }
.pick::after { content: ""; position: absolute; right: 10px; top: 13px; border: 5px solid transparent; border-top: 7px solid #000; border-bottom: 0; }
select { appearance: none; flex: 1; height: 31px; padding: 0 18px; border: 2px solid #d6d7d9; border-radius: 3px; background: linear-gradient(#f1f1f2, #e7e7e7); font: inherit; color: #111; }
input[type="text"] { flex: 1; min-width: 0; height: 30px; padding: 0 4px 2px; border: 2px solid #d3d4d7; background: #fff; font: inherit; color: #111; }
.browse { width: 90px; height: 31px; margin: 0 -3px 0 11px; border: 2px solid #d6d7d9; border-radius: 3px; background: linear-gradient(#f3f3f3, #e6e6e6); line-height: 24px; }
.check { display: flex; align-items: center; gap: 7px; height: 23px; line-height: 22px; padding: 0 0 1px 2px; }
.check input { appearance: none; width: 21px; height: 20px; margin: 3px 0 0; border: 2px solid #6e6e6e; background: #f0f0f0; }
.caption { height: 25px; }
.unit { width: 20px; margin-left: 16px; line-height: 30px; }
.times { display: flex; height: 180px; border: 2px solid #d3d4d7; border-bottom-width: 5px; overflow: hidden; }
.times ul { flex: 1; display: flex; flex-direction: column; gap: 4px; padding: 3px 1px 0 3px; }
.times li { flex: none; height: 26px; line-height: 26px; padding-left: 5px; background: #dadadc; }
.include { margin: 14px 40px 0 4px; border-top: 2px solid #d5d6da; border-left: 0; padding-left: 8px; }
.include legend { padding: 0 6px 0 2px; }

.bar { flex: none; width: 26px; display: flex; flex-direction: column; background: #fcfcfe; }
.bar i { flex: none; height: 26px; background: #f3f4f6; display: flex; align-items: center; justify-content: center; }
.bar i::before { content: ""; width: 8px; height: 8px; border: 2px solid #c8c9cc; border-width: 2px 0 0 2px; transform: rotate(45deg); margin-top: 6px; }
.bar .dn::before { transform: rotate(225deg); margin: -6px 0 0; }
.bar b { background: #e3e4e6; margin-bottom: auto; }
.t1 b { height: 12px; }
.t2 b { height: 719px; margin-top: 135px; }
.t3 b { height: 49px; margin-top: 82px; }

.right { display: flex; flex-direction: column; gap: 8px; min-width: 0; min-height: 0; }
.graphics { flex: 1; background: linear-gradient(#fafbff 10%, #e4f0ff); }
.dock { display: flex; align-items: flex-end; gap: 12px; height: 45px; flex: none; padding-left: 6px; border-bottom: 3px solid #d5d6da; }
.dtab { display: flex; align-items: center; height: 35px; padding: 0 6px; background: #ebebec; font-size: 20px; white-space: nowrap; color: #111; }
.dtab.on { height: 37px; background: #fafbff; color: #31599f; border: 2px solid #d5d6da; border-bottom: 0; margin-bottom: -3px; padding: 2px 6px 0; }
.x { width: 14px; height: 14px; margin: 0 3px 0 12px; fill: none; stroke: #cfd6e2; stroke-width: 1.5px; }
.dock .winctl { align-self: center; padding: 16px 5px 0 0; }
.gbar { display: flex; align-items: center; height: 47px; flex: none; padding-left: 11px; gap: 10px; }
.gbar button { display: flex; flex: none; }
.gbar svg { width: 24px; height: 24px; flex: none; }
.gbar .m1 { margin-left: 6px; }
.gbar .m4 { margin-left: 12px; }
.gbar .m3 { margin-left: 18px; }
.gbar .m4 + .caret, .gbar .m3 + .caret { margin-left: -2px; }
.gbar .tog { align-items: center; justify-content: center; width: 28px; height: 27px; border: 2px solid #2c5a9e; border-radius: 3px; background: linear-gradient(#8fb9e6, #d9ebfb); margin: 0 -2px; }
.gbar .wide2 { width: 55px; gap: 6px; margin: 0 0 0 18px; }
.plot { display: block; flex: 1; min-height: 0; width: 100%; }
.lbl { font: 17px "DejaVu Sans", "Noto Sans CJK SC", sans-serif; fill: #111; }
.axis { fill: none; stroke: #96989b; vector-effect: non-scaling-stroke; }
.rim { fill: none; stroke: #111; vector-effect: non-scaling-stroke; }
.mesh polygon { stroke: #111; stroke-width: 1px; stroke-linejoin: round; vector-effect: non-scaling-stroke; }
.messages { flex: none; height: 289px; padding-bottom: 6px; }
.mbar { height: 42px; flex: none; padding: 12px 0 0 10px; }
.mbar svg { width: 24px; height: 24px; display: block; }
.log { flex: 1; min-height: 0; display: flex; margin: 0 5px 0 6px; border: 2px solid #d3d4d7; overflow: hidden; }
.lines { flex: 1; min-width: 0; padding-left: 4px; margin-top: -3px; }
.lines p { line-height: 24px; white-space: nowrap; }
.edge { border: 2px solid #d5d6da; border-right: 0; padding-top: 859px; }
.edge i { display: block; height: 39px; background: #dfe9f5; }

.note { position: absolute; color: #ee1c24; white-space: nowrap; }
.n1, .n2 { font-size: 42px; line-height: 52px; font-weight: 700; }
.arrow1 { left: 927px; top: 439px; width: 104px; height: 84px; }
.n1 { left: 867px; top: 537px; }
.arrow2 { left: 753px; top: 1067px; width: 244px; height: 28px; }
.n2 { left: 1012px; top: 1053px; }
.mark { right: 16px; bottom: 7px; font-size: 19px; line-height: 28px; color: #85878b; text-shadow: 1px 1px #fff; }
```
FILE: mesh.js
```js
// Surface mesh of the block: each face has its corner quad, a plane basis
// (used so that the triangulation follows the face, not the screen) and nodes.
const faces = [
  { base: '#86dc00', tones: ['#7edb00', '#86e000', '#9be000', '#6cdc00', '#b4e400', '#8cf000'],
    o: [34, 577], u: [359, 564], ul: 80, v: [11, 293], vl: 34,
    quad: [34,577, 393,1141, 403,1458, 45,870],
    pts: [34,577,75,639,117,708,160,776,205,845,250,917,296,989,344,1066,393,1141,398,1300,403,1458,353,1378,307,1297,262,1222,215,1147,173,1073,128,1005,87,937,45,870,40,720,
      66,712,103,785,72,835,115,860,148,852,165,918,110,905,183,1005,192,925,235,983,150,962,228,1072,280,1053,195,1052,270,1148,318,1225,325,1130,240,1130,363,1190,358,1283,285,1205,330,1290],
    seeds: { '#f0c400': [118,850,158,930,140,900], '#e0e400': [195,1100,85,740,300,1180,215,1040], '#40dc08': [55,680,260,1060,205,960,355,1230,90,870] } },
  { base: '#84d800', tones: ['#74d800', '#80dc00', '#8cdc00', '#9cdc00', '#a8e000', '#7cdc00'],
    o: [393, 1141], u: [1017, -404], ul: 100, v: [10, 317], vl: 34,
    quad: [393,1141, 1410,737, 1405,1038, 403,1458],
    pts: [393,1141,505,1098,616,1053,723,1010,826,968,925,929,1024,889,1122,850,1219,812,1315,773,1410,737,1408,890,1405,1038,1315,1076,1220,1115,1124,1157,1028,1196,929,1237,829,1279,727,1322,620,1366,513,1410,403,1458,398,1300,
      490,1300,572,1297,470,1210,575,1185,650,1254,686,1134,758,1209,793,1088,862,1164,894,1047,960,1122,994,1008,1057,1083,1090,968,1153,1044,1187,929,1247,1006,1283,888,1340,965],
    seeds: { '#44d800': [1090,1030,1210,965,800,1140,610,1320,520,1350], '#d8d800': [960,950,930,1000,900,1110,1010,1150,640,1110,540,1250,1220,860,710,1280] } },
  { base: '#b0ff14', tones: ['#a8ff14', '#b8ff14', '#c8ff14', '#a0ff14', '#ccff14', '#dcff14', '#f4ff14'],
    o: [393, 1141], u: [1017, -404], ul: 100, v: [-359, -564], vl: 80,
    quad: [34,577, 982,234, 1410,737, 393,1141],
    pts: [34,577,135,541,232,508,333,467,429,433,525,399,618,366,710,332,803,299,893,267,982,234,1030,292,1081,351,1132,411,1184,472,1239,536,1293,602,1345,665,1410,737,
      505,1098,616,1053,723,1010,826,968,925,929,1024,889,1122,850,1219,812,1315,773,75,639,117,708,160,776,205,845,250,917,296,989,344,1066,393,1141,
      137,589,219,566,315,539,410,503,515,468,611,435,702,401,793,370,893,337,962,296,996,348,853,405,945,408,1036,409,784,434,870,470,989,470,1081,471,
      692,467,603,506,508,541,406,573,303,599,195,640,772,500,684,537,598,578,498,608,391,639,303,661,239,719,842,535,927,536,1034,536,1135,536,
      762,583,857,585,961,598,1078,594,1182,598,677,594,641,626,706,629,780,637,875,635,936,656,1029,664,1131,645,1241,667,
      565,645,474,684,368,722,335,789,287,845,361,925,648,671,745,660,823,677,900,680,841,708,780,710,556,707,592,695,
      936,717,1030,720,1133,710,1224,745,1313,717,850,750,922,793,1024,757,1122,780,788,770,818,790,848,826,920,858,1024,822,812,837,860,880,857,918,
      457,760,463,827,395,806,400,880,443,912,417,989,438,1060,535,1010,530,935,632,990,557,905,605,915,660,925,720,918,693,945,757,940,768,888,810,915,
      568,880,597,875,545,830,387,765,505,790,562,765,684,733,615,755,617,700,678,690,742,700,764,730,731,765,672,780,652,818,715,815,760,800,568,812,608,805,652,842,720,842,620,850],
    seeds: {
      '#54ff14': [350,570,260,630,690,395,830,335,815,400,920,370,960,375,990,430,1035,490,1010,620,1040,610,1190,560,1245,610,1235,640,660,565,810,560,620,650,430,800,305,890,580,980,720,970,895,700,860,660,890,830,985,780,650,400],
      '#8cff14': [1070,740,1260,740,1060,700,1330,730,1150,470,1060,370,440,1100,520,1060,860,300,560,470,740,430,1290,680,470,790,760,680,700,640,790,860,1100,760],
      '#ffff14': [380,470,360,510,470,450,580,390,560,500,450,530,450,580,350,620,550,570,290,690,400,740,420,720,210,800,170,810,890,430,800,530,800,470,920,500,980,500,840,610,700,560,520,620,610,590,350,960,330,1030,390,1030,380,980,470,970,580,1020,980,720,980,840,950,820,1090,670,660,820,500,900,610,800,740,450,640,480,720,860,480,860,590,830,820,640,900,570,330,680,410,690,450,940,500,960,420,950,380,900,640,880,600,850,820,730,520,680],
      '#ffc814': [1090,430,1135,490,960,890,990,870,640,720,660,750,700,715,680,760,720,745] } }
];

function cross(a, b, c) { return (b.x - a.x) * (c.y - a.y) - (b.y - a.y) * (c.x - a.x); }
function inCircle(a, b, c, p) {
  const ax = a.x - p.x, ay = a.y - p.y, bx = b.x - p.x, by = b.y - p.y, cx = c.x - p.x, cy = c.y - p.y;
  const d = (ax * ax + ay * ay) * (bx * cy - cx * by) - (bx * bx + by * by) * (ax * cy - cx * ay) + (cx * cx + cy * cy) * (ax * by - bx * ay);
  return cross(a, b, c) > 0 ? d > 0 : d < 0;
}

function triangulate(pts) {
  const far = [{ x: -9000, y: -9000 }, { x: 9000, y: -9000 }, { x: 0, y: 12000 }];
  let tris = [far];
  for (const p of pts) {
    const bad = tris.filter(t => inCircle(t[0], t[1], t[2], p));
    const edges = [];
    for (const t of bad) for (let i = 0; i < 3; i++) {
      const a = t[i], b = t[(i + 1) % 3];
      const k = edges.findIndex(e => (e[0] === b && e[1] === a) || (e[0] === a && e[1] === b));
      if (k >= 0) edges.splice(k, 1); else edges.push([a, b]);
    }
    tris = tris.filter(t => !bad.includes(t)).concat(edges.map(e => [e[0], e[1], p]));
  }
  return tris.filter(t => !t.some(p => far.includes(p)) && Math.abs(cross(t[0], t[1], t[2])) > 5);
}

function inside(t, x, y) {
  const s = t.map((p, i) => {
    const q = t[(i + 1) % 3];
    return (q.X - p.X) * (y - p.Y) - (q.Y - p.Y) * (x - p.X) > 0;
  });
  return s[0] === s[1] && s[1] === s[2];
}

const out = [];
let n = 7;
for (const f of faces) {
  out.push(`<polygon points="${f.quad}" fill="${f.base}"/>`);
  const det = f.u[0] * f.v[1] - f.u[1] * f.v[0];
  const nodes = [];
  for (let i = 0; i < f.pts.length; i += 2) {
    const X = f.pts[i], Y = f.pts[i + 1], dx = X - f.o[0], dy = Y - f.o[1];
    nodes.push({ X, Y, x: (dx * f.v[1] - dy * f.v[0]) / det * f.ul, y: (f.u[0] * dy - f.u[1] * dx) / det * f.vl });
  }
  for (const t of triangulate(nodes)) {
    n = (n * 1103 + 377) % 7919;
    let fill = f.tones[n % f.tones.length];
    for (const c in f.seeds) for (let i = 0; i < f.seeds[c].length; i += 2)
      if (inside(t, f.seeds[c][i], f.seeds[c][i + 1])) fill = c;
    out.push(`<polygon points="${t.map(p => p.X + ',' + p.Y).join(' ')}" fill="${fill}"/>`);
  }
}
document.getElementById('mesh').innerHTML = out.join('');
```
